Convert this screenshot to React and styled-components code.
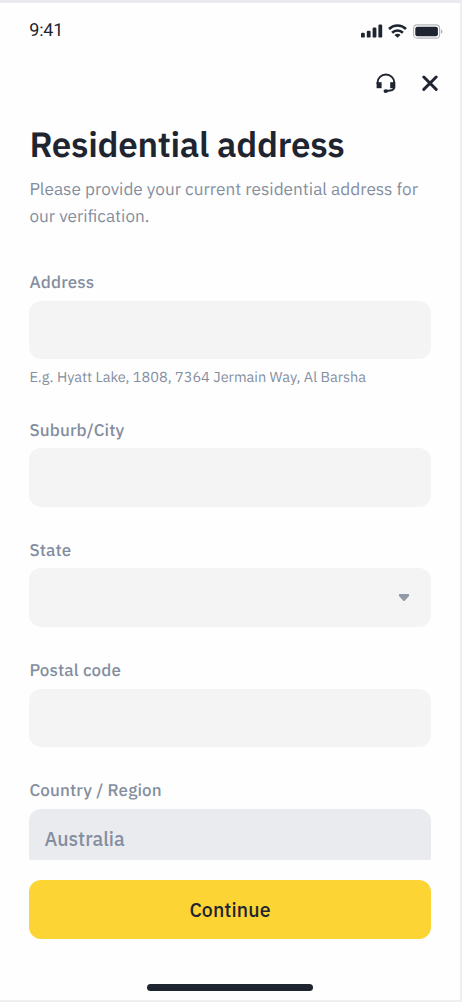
import React, { useState } from 'react'
import styled, { createGlobalStyle } from 'styled-components'

const ink = '#1e2530'
const muted = '#848e9e'

const fields = [
	{ name: 'address', label: 'Address', hint: 'E.g. Hyatt Lake, 1808, 7364 Jermain Way, Al Barsha' },
	{ name: 'city', label: 'Suburb/City' },
	{ name: 'state', label: 'State', select: true },
	{ name: 'postal', label: 'Postal code' },
	{ name: 'country', label: 'Country / Region', disabled: true },
]

const SignalIcon = () => (
	<svg width="22" height="14" viewBox="0 0 22 14" fill={ink}>
		<rect x="0" y="8.8" width="3.8" height="4.8" rx="1.2" />
		<rect x="5.8" y="6.8" width="3.8" height="6.8" rx="1.2" />
		<rect x="11.6" y="3.6" width="3.8" height="10" rx="1.2" />
		<rect x="17.4" y="0.5" width="3.8" height="13.1" rx="1.2" />
	</svg>
)

const WifiIcon = () => (
	<svg width="19" height="14" viewBox="0 0 19 14" fill="none" stroke={ink} strokeWidth="2.6">
		<path d="M1 5a12.2 12.2 0 0 1 17 0" />
		<path d="M4.1 8.7a7.7 7.7 0 0 1 10.8 0" />
		<path d="M9.5 13.8 6.5 11a4.2 4.2 0 0 1 6 0z" fill={ink} stroke="none" />
	</svg>
)

const BatteryIcon = () => (
	<svg width="30" height="15" viewBox="0 0 30 15">
		<rect x="0.6" y="0.9" width="26" height="13.2" rx="3.4" fill="none" stroke="#b4b6ba" strokeWidth="1.1" />
		<rect x="2.3" y="2.8" width="22.6" height="9.4" rx="2" fill={ink} />
		<path d="M27.9 5.2c2.2.8 2.2 3.8 0 4.6z" fill="#b4b6ba" />
	</svg>
)

const HeadsetIcon = () => (
	<svg width="20" height="20" viewBox="0 0 20 20">
		<path d="M1.6 11V9.4a8.3 7.8 0 0 1 16.6 0V14q0 3-4 3.5l-4 .5" fill="none" stroke={ink} strokeWidth="2" />
		<path d="M.6 9.2h5v6h-5z" fill={ink} />
		<path d="M19.2 9.2h-5v6h5z" fill={ink} />
		<ellipse cx="9.8" cy="18.1" rx="2.3" ry="1.9" fill={ink} />
	</svg>
)

const CloseIcon = () => (
	<svg width="16" height="16" viewBox="0 0 16 16">
		<path d="M1.8 2l12.4 12.4M14.2 2L1.8 14.4" stroke={ink} strokeWidth="2.9" strokeLinecap="round" />
	</svg>
)

const App = () => {
	const [values, setValues] = useState({ address: '', city: '', state: '', postal: '', country: 'Australia' })

	const update = (e) => {
		setValues({ ...values, [e.target.name]: e.target.value })
	}

	return (
		<Screen>
			<GlobalStyle />
			<StatusBar>
				<Time>9:41</Time>
				<StatusIcons>
					<SignalIcon />
					<WifiIcon />
					<BatteryIcon />
				</StatusIcons>
			</StatusBar>
			<Toolbar>
				<IconButton aria-label="Support"><HeadsetIcon /></IconButton>
				<IconButton aria-label="Close"><CloseIcon /></IconButton>
			</Toolbar>
			<Content>
				<Title>Residential address</Title>
				<Intro>
					Please provide your current residential address for<br />
					our verification.
				</Intro>
				<Form>
					{fields.map(field => (
						<Field key={field.name}>
							<Label htmlFor={field.name}>{field.label}</Label>
							<Control $disabled={field.disabled}>
								<Input
									id={field.name}
									name={field.name}
									value={values[field.name]}
									onChange={update}
									readOnly={field.select}
									disabled={field.disabled}
								/>
								{field.select && <Caret viewBox="0 0 10 7"><path d="M0 0h10v2L6 6.4Q5 7.4 4 6.4L0 2z" /></Caret>}
							</Control>
							{field.hint && <Hint>{field.hint}</Hint>}
						</Field>
					))}
				</Form>
			</Content>
			<Footer>
				<ContinueButton>Continue</ContinueButton>
				<HomeIndicator />
			</Footer>
		</Screen>
	)
}

export default App;

const GlobalStyle = createGlobalStyle`
	* {
		box-sizing: border-box;
	}

	body {
		margin: 0;
		background: #fff;
		font-family: 'IBM Plex Sans', 'Noto Sans', sans-serif;
		text-rendering: geometricPrecision;
		overflow: hidden;
	}
`

const Screen = styled.main`
	display: flex;
	flex-direction: column;
	width: 462px;
	height: 1002px;
	border-top: 3px solid #eaebef;
	border-right: 2px solid #eeeef0;
	border-bottom: 2px solid #eeeef0;
	background: #fefefe;
	color: ${ink};
`

const StatusBar = styled.header`
	display: flex;
	justify-content: space-between;
	align-items: center;
	height: 56px;
	padding: 0 17px 0 29.3px;
`

const Time = styled.span`
	margin-top: -2px;
	font-family: Roboto, sans-serif;
	font-size: 18px;
	letter-spacing: -0.2px;
`

const StatusIcons = styled.div`
	display: flex;
	align-items: center;
	gap: 5px;

	svg {
		display: block;
	}

	svg:first-child {
		margin-right: 0;
	}

	svg:last-child {
		margin-left: 1px;
	}
`

const Toolbar = styled.nav`
	display: flex;
	justify-content: flex-end;
	align-items: center;
	gap: 26px;
	height: 48px;
	padding-right: 22px;
`

const IconButton = styled.button`
	display: flex;
	padding: 0;
	border: 0;
	background: none;
	cursor: pointer;
`

const Content = styled.section`
	height: 753px;
	padding: 15px 29px 0 29.4px;
	overflow: hidden;
`

const Title = styled.h1`
	margin: 0;
	font-size: 35px;
	font-weight: 600;
	line-height: 44px;
	letter-spacing: -0.3px;
	white-space: nowrap;
`

const Intro = styled.p`
	margin: 9px 0 0;
	color: ${muted};
	font-size: 17.2px;
	line-height: 27px;
	white-space: nowrap;
`

const Form = styled.form`
	display: flex;
	flex-direction: column;
	gap: 31.2px;
	margin-top: 41.3px;
`

const Field = styled.div`
	display: flex;
	flex-direction: column;
`

const Label = styled.label`
	margin-bottom: 6px;
	color: ${muted};
	font-size: 17px;
	font-weight: 500;
	line-height: 24.5px;
	letter-spacing: 0.14px;
`

const Control = styled.div`
	display: flex;
	align-items: center;
	height: 58.6px;
	padding: 0 22px 0 15px;
	border-radius: 12px;
	background: ${props => props.$disabled ? '#eaebef' : '#f4f4f4'};
`

const Input = styled.input`
	flex: 1;
	min-width: 0;
	padding: 0;
	border: 0;
	outline: 0;
	background: transparent;
	color: ${muted};
	font-family: inherit;
	font-size: 19.5px;
	font-weight: 500;
`

const Caret = styled.svg`
	width: 10px;
	height: 7px;
	fill: #929aa5;
`

const Hint = styled.span`
	margin-top: 7.5px;
	margin-bottom: -0.5px;
	color: ${muted};
	font-size: 14.5px;
	line-height: 20px;
	white-space: nowrap;
`

const Footer = styled.footer`
	display: flex;
	flex-direction: column;
	align-items: center;
	padding: 20px 29px 0;
`

const ContinueButton = styled.button`
	width: 100%;
	height: 59px;
	padding: 0;
	border: 0;
	border-radius: 12px;
	background: #fcd535;
	color: ${ink};
	font-family: inherit;
	font-size: 19.5px;
	font-weight: 500;
	letter-spacing: 0.1px;
	cursor: pointer;
`

const HomeIndicator = styled.div`
	width: 166px;
	height: 6.5px;
	margin-top: 45.3px;
	border-radius: 4px;
	background: ${ink};
`
